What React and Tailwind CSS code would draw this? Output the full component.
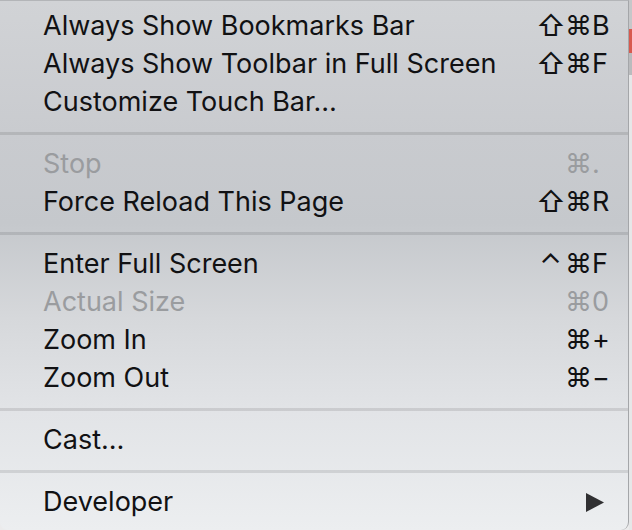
import React from "react";

const FONT = { fontFamily: 'Inter, "Noto Sans", "DejaVu Sans", sans-serif' };

function Shortcut({ mod, cmd = true, k, disabled }) {
  const color = disabled ? "text-[#9a9c9f]" : "text-[#111113]";
  return (
    <div className={`flex items-center ${color}`}>
      <span className="w-[29px] text-center text-[29px]">{mod || ""}</span>
      <span className="w-[27px] text-left text-[27px]">{cmd ? "⌘" : ""}</span>
      <span className="w-[24px] text-left">{k}</span>
    </div>
  );
}

function Row({ label, disabled, sc, submenu }) {
  return (
    <div className="flex h-[38px] items-center pl-[43px] pr-[12px] leading-[38px]">
      <span
        className={`flex-1 whitespace-nowrap ${
          disabled ? "text-[#9a9c9f]" : "text-[#111113]"
        }`}
      >
        {label}
      </span>
      {sc && <Shortcut {...sc} disabled={disabled} />}
      {submenu && (
        <div className="flex items-center">
          <svg width="18" height="19" viewBox="0 0 18 19">
            <path d="M0 0 L18 9.5 L0 19 Z" fill="#303032" />
          </svg>
          <span className="w-[12px]" />
        </div>
      )}
    </div>
  );
}

function Sep() {
  return <div className="mt-[11px] mb-[10px] h-[3px] bg-black/10" />;
}

export default function App() {
  return (
    <div className="flex h-[530px] w-[632px] bg-[#ebebec]" style={FONT}>
      <div className="flex w-[629px] flex-col overflow-hidden rounded-b-[8px] border-r border-t border-r-[#a4a6a9] border-t-[#b3b5b8] bg-[linear-gradient(to_bottom,#d1d3d6_0%,#c9cbcf_25%,#c5c8cc_42%,#d6d8db_60%,#e2e4e7_78%,#eceef0_100%)] pt-[6px] text-[27px]">
        <Row label="Always Show Bookmarks Bar" sc={{ mod: "⇧", k: "B" }} />
        <Row label="Always Show Toolbar in Full Screen" sc={{ mod: "⇧", k: "F" }} />
        <Row label="Customize Touch Bar…" />
        <Sep />
        <Row label="Stop" disabled sc={{ k: "." }} />
        <Row label="Force Reload This Page" sc={{ mod: "⇧", k: "R" }} />
        <Sep />
        <Row label="Enter Full Screen" sc={{ mod: "⌃", k: "F" }} />
        <Row label="Actual Size" disabled sc={{ k: "0" }} />
        <Row label="Zoom In" sc={{ k: "+" }} />
        <Row label="Zoom Out" sc={{ k: "−" }} />
        <Sep />
        <Row label="Cast…" />
        <Sep />
        <Row label="Developer" submenu />
      </div>
      <div className="flex w-[3px] flex-col">
        <div className="h-[29px] bg-[#c6c7c9]" />
        <div className="h-[24px] bg-[#d75a4f]" />
        <div className="h-[22px] bg-[#babbbd]" />
        <div className="flex-1 bg-[#e6e7e8]" />
      </div>
    </div>
  );
}
